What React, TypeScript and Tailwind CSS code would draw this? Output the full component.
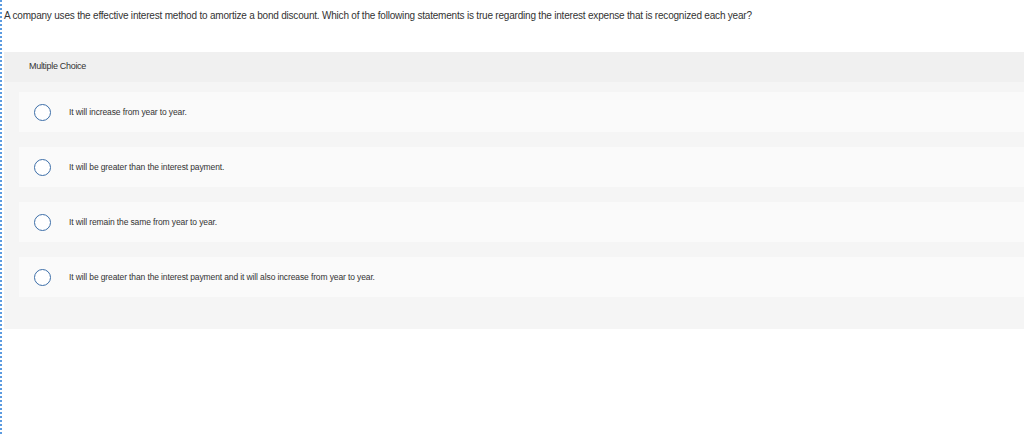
import React from "react";

const options = [
  "It will increase from year to year.",
  "It will be greater than the interest payment.",
  "It will remain the same from year to year.",
  "It will be greater than the interest payment and it will also increase from year to year.",
];

export default function App() {
  return (
    <div
      className="w-[1024px] h-[434px] bg-white border-l-2 border-dotted border-[#5b9be0] overflow-hidden"
      style={{ fontFamily: '"Liberation Sans", Arial, sans-serif' }}
    >
      <div className="pl-[2px] pt-[9px] h-[52px] text-[10px] tracking-[-0.2px] leading-[13px] text-[#333]">
        A company uses the effective interest method to amortize a bond discount. Which of the following statements is true regarding the interest expense that is recognized each year?
      </div>
      <div className="ml-[2px] bg-[#f5f5f5] pb-[32px]">
        <div className="h-[30px] bg-[#f0f0f0] flex items-center pl-[25px] text-[9px] tracking-[-0.3px] text-[#333]">
          Multiple Choice
        </div>
        <div className="pt-[10px] pl-[15px] flex flex-col gap-[15px]">
          {options.map((o) => (
            <div key={o} className="h-[40px] bg-[#fafafa] flex items-center">
              <div className="ml-[15px] w-[17px] h-[17px] rounded-full border border-[#3c6ea8] bg-white shrink-0" />
              <div className="ml-[18px] text-[8.5px] tracking-[-0.12px] text-[#333]">{o}</div>
            </div>
          ))}
        </div>
      </div>
    </div>
  );
}
